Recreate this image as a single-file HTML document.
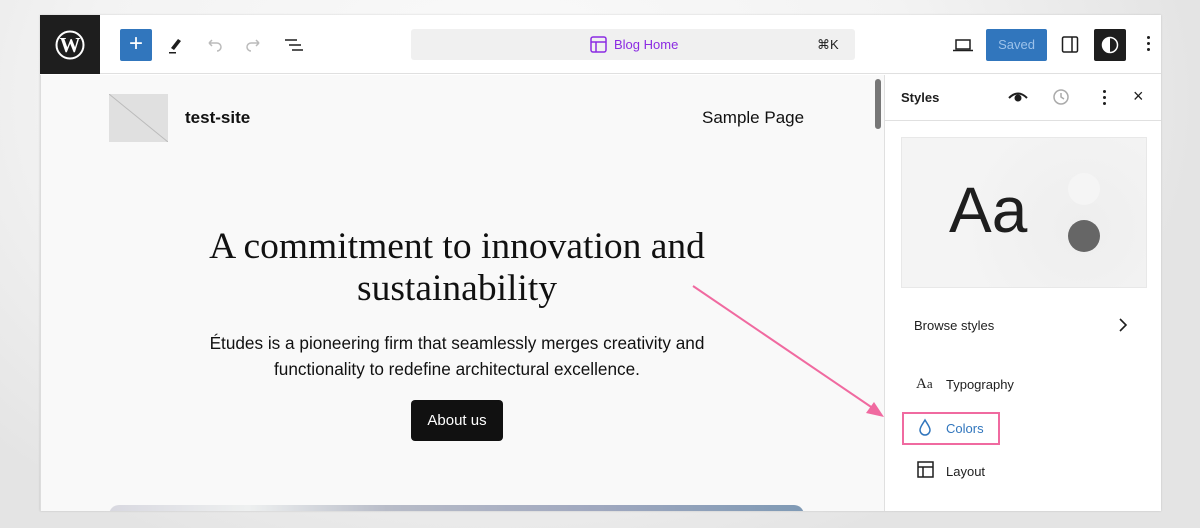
<!DOCTYPE html>
<html><head><meta charset="utf-8"><style>
*{box-sizing:border-box;margin:0;padding:0}
body{width:1200px;height:528px;overflow:hidden;background:#ececec;font-family:"Liberation Sans",sans-serif;position:relative}
.bg{position:absolute;left:0;top:0;width:1200px;height:528px;background:radial-gradient(ellipse 700px 500px at 500px 100px,#fafafa 0%,#f3f3f3 60%,#e4e4e4 100%)}
.win{position:absolute;left:40px;top:15px;width:1121px;height:496px;background:#fff;overflow:hidden;box-shadow:0 0 2px rgba(0,0,0,.15)}
.tb{position:absolute;left:0;top:0;width:1121px;height:59px;border-bottom:1px solid #e0e0e0;background:#fff}
.wp{position:absolute;left:0;top:0;width:60px;height:59px;background:#1e1e1e}
.abs{position:absolute}
.canvas{position:absolute;left:0;top:60px;width:844px;height:436px;background:#f9f9f9;border-left:1px solid #ddd}
.side{position:absolute;left:844px;top:60px;width:277px;height:436px;background:#fff;border-left:1px solid #e0e0e0}
</style></head><body>
<div class="bg"></div>
<div class="win">
 <div class="tb">
  <div class="wp"><svg class="abs" style="left:15px;top:15px" width="30" height="30" viewBox="0 0 30 30"><circle cx="15" cy="15" r="13.5" fill="none" stroke="#fff" stroke-width="2"/><text x="15" y="22" text-anchor="middle" fill="#fff" font-family="Liberation Serif" font-weight="bold" font-size="21">W</text></svg></div>
  <div class="abs" style="left:80px;top:14px;width:32px;height:32px;background:#3176bd;border-radius:2px;color:#fff;font-size:24px;line-height:30px;text-align:center">+</div>
  <svg class="abs" style="left:126px;top:20px" width="20" height="20" viewBox="0 0 20 20"><path d="M5 13 L12 4 L15 6 L8 15 Z" fill="#1e1e1e"/><rect x="3" y="17" width="7" height="1.5" fill="#1e1e1e"/></svg>
  <svg class="abs" style="left:164px;top:20px" width="20" height="20"><path d="M5 8 H13 A4 4 0 0 1 13 16 M5 8 L8 5 M5 8 L8 11" fill="none" stroke="#bbb" stroke-width="1.5"/></svg>
  <svg class="abs" style="left:204px;top:20px" width="20" height="20"><path d="M15 8 H7 A4 4 0 0 0 7 16 M15 8 L12 5 M15 8 L12 11" fill="none" stroke="#bbb" stroke-width="1.5"/></svg>
  <svg class="abs" style="left:243px;top:20px" width="22" height="20"><path d="M2 5H14M6 10H18M9 15H20" stroke="#1e1e1e" stroke-width="1.6"/></svg>
  <div class="abs" style="left:371px;top:14px;width:444px;height:31px;background:#f0f0f0;border-radius:3px"></div>
  <svg class="abs" style="left:550px;top:21px" width="17" height="17"><rect x="1" y="1" width="15" height="15" rx="2" fill="none" stroke="#8b2be2" stroke-width="1.5"/><path d="M1 6H16M6 6V16" stroke="#8b2be2" stroke-width="1.5"/></svg>
  <div class="abs" style="left:574px;top:22px;font-size:13px;color:#8b2be2">Blog Home</div>
  <div class="abs" style="left:777px;top:22px;font-size:13px;color:#1e1e1e">⌘K</div>
  <svg class="abs" style="left:912px;top:20px" width="22" height="20"><rect x="4" y="5" width="14" height="9" fill="none" stroke="#1e1e1e" stroke-width="1.5"/><path d="M1 15.5H21" stroke="#1e1e1e" stroke-width="1.5"/></svg>
  <div class="abs" style="left:946px;top:14px;width:61px;height:32px;background:#3176bd;border-radius:2px;color:#9cc2ea;font-size:13px;line-height:32px;text-align:center">Saved</div>
  <svg class="abs" style="left:1021px;top:20px" width="18" height="20"><rect x="1.5" y="2" width="15" height="15" rx="1.5" fill="none" stroke="#1e1e1e" stroke-width="1.5"/><path d="M11 2V17" stroke="#1e1e1e" stroke-width="1.5"/></svg>
  <div class="abs" style="left:1054px;top:14px;width:32px;height:32px;background:#1e1e1e;border-radius:2px"><svg style="position:absolute;left:7px;top:7px" width="18" height="18"><circle cx="9" cy="9" r="7.5" fill="none" stroke="#fff" stroke-width="1.5"/><path d="M9 1.5A7.5 7.5 0 0 0 9 16.5Z" fill="#fff"/></svg></div>
  <div class="abs" style="left:1107px;top:21px;width:3px;height:3px;background:#1e1e1e;border-radius:50%;box-shadow:0 6px 0 #1e1e1e,0 12px 0 #1e1e1e"></div>
 </div>
 <div class="canvas">
  <div class="abs" style="left:68px;top:19px;width:59px;height:48px;background:#e0e0e0;overflow:hidden"><svg width="59" height="48"><path d="M0 0L59 48" stroke="#bbb" stroke-width="1"/></svg></div>
  <div class="abs" style="left:144px;top:33px;font-size:17px;font-weight:bold;color:#111">test-site</div>
  <div class="abs" style="left:661px;top:33px;font-size:17px;color:#111">Sample Page</div>
  <div class="abs" style="left:90px;top:151px;width:652px;text-align:center;font-family:'Liberation Serif',serif;font-size:37.5px;line-height:42px;color:#111">A commitment to innovation and sustainability</div>
  <div class="abs" style="left:130px;top:255px;width:572px;text-align:center;font-size:17.2px;line-height:26px;color:#111">Études is a pioneering firm that seamlessly merges creativity and functionality to redefine architectural excellence.</div>
  <div class="abs" style="left:370px;top:325px;width:92px;height:41px;background:#111;border-radius:4px;color:#fff;font-size:15px;line-height:41px;text-align:center">About us</div>
  <div class="abs" style="left:68px;top:430px;width:695px;height:20px;border-radius:10px;background:linear-gradient(90deg,#d8d8e0,#eef0f0 20%,#b8bcc8 40%,#a0a8bf 70%,#7f9ab5)"></div>
  <div class="abs" style="left:834px;top:4px;width:6px;height:50px;background:#777;border-radius:3px"></div>
 </div>
 <div class="side">
  <div class="abs" style="left:0;top:0;width:277px;height:46px;border-bottom:1px solid #e0e0e0"></div>
  <div class="abs" style="left:16px;top:15px;font-size:13px;font-weight:bold;color:#1e1e1e">Styles</div>
  <svg class="abs" style="left:122px;top:14px" width="22" height="16"><path d="M2 9Q11 0 20 9" fill="none" stroke="#1e1e1e" stroke-width="2"/><circle cx="11" cy="9" r="3.5" fill="#1e1e1e"/></svg>
  <svg class="abs" style="left:165px;top:12px" width="22" height="20"><circle cx="11" cy="10" r="7" fill="none" stroke="#aaa" stroke-width="1.5"/><path d="M11 6V10L14 12" stroke="#aaa" stroke-width="1.5" fill="none"/></svg>
  <div class="abs" style="left:218px;top:15px;width:3px;height:3px;background:#1e1e1e;border-radius:50%;box-shadow:0 6px 0 #1e1e1e,0 12px 0 #1e1e1e"></div>
  <div class="abs" style="left:248px;top:11px;font-size:18px;color:#1e1e1e">×</div>
  <div class="abs" style="left:16px;top:62px;width:246px;height:151px;border:1px solid #e8e8e8;background:radial-gradient(circle at 180px 90px,#eee,#f4f4f4 60%)"></div>
  <div class="abs" style="left:64px;top:103px;font-size:64px;color:#1e1e1e;line-height:1">Aa</div>
  <div class="abs" style="left:183px;top:98px;width:32px;height:32px;border-radius:50%;background:#f5f5f5"></div>
  <div class="abs" style="left:183px;top:145px;width:32px;height:32px;border-radius:50%;background:#666"></div>
  <div class="abs" style="left:29px;top:243px;font-size:13px;color:#1e1e1e">Browse styles</div>
  <svg class="abs" style="left:232px;top:242px" width="12" height="16"><path d="M3 2L9 8L3 14" fill="none" stroke="#1e1e1e" stroke-width="1.6"/></svg>
  <div class="abs" style="left:31px;top:301px;font-size:15px;color:#1e1e1e;font-family:'Liberation Serif',serif">A<span style="font-size:13px">a</span></div>
  <div class="abs" style="left:61px;top:302px;font-size:13px;color:#1e1e1e">Typography</div>
  <div class="abs" style="left:17px;top:337px;width:98px;height:33px;border:2px solid #f06aa0"></div>
  <svg class="abs" style="left:32px;top:343px" width="16" height="20"><path d="M8 2C5 7 3 9 3 12A5 5 0 0 0 13 12C13 9 11 7 8 2Z" fill="none" stroke="#3176bd" stroke-width="1.5"/></svg>
  <div class="abs" style="left:61px;top:346px;font-size:13px;color:#3176bd">Colors</div>
  <svg class="abs" style="left:32px;top:386px" width="18" height="18"><rect x="1" y="1" width="15" height="15" fill="none" stroke="#1e1e1e" stroke-width="1.5"/><path d="M1 6H16M6 6V16" stroke="#1e1e1e" stroke-width="1.5"/></svg>
  <div class="abs" style="left:61px;top:389px;font-size:13px;color:#1e1e1e">Layout</div>
 </div>
</div>
<svg class="abs" style="left:0;top:0" width="1200" height="528"><path d="M693 286L880 413" stroke="#f06aa0" stroke-width="2"/><path d="M884 417L866 413L874 402Z" fill="#f06aa0"/></svg>
</body></html>
